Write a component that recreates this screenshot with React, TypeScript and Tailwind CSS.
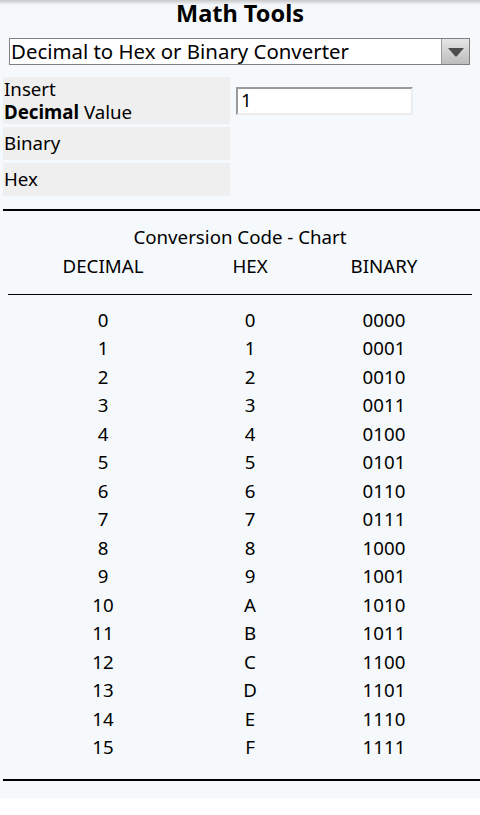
import React from "react";

const rows = Array.from({ length: 16 }, (_, i) => ({
  dec: String(i),
  hex: i.toString(16).toUpperCase(),
  bin: i.toString(2).padStart(4, "0"),
}));

const App = () => {
  return (
    <div className="w-[480px] min-h-[815px] bg-white font-['Noto_Sans','Open_Sans',sans-serif] text-black">
      <div className="relative bg-[#f6f9fc] pb-[17px]">
        {/* ombre du haut */}
        <div className="absolute top-0 left-0 right-0 h-[5px] bg-gradient-to-b from-[#c8c8c8] to-transparent" />

        <h1 className="relative text-center text-[23.5px] font-bold leading-[27px]">Math Tools</h1>

        {/* faux select */}
        <div className="mx-[9px] mt-[11px] h-[27px] w-[461px] border border-[#808080] bg-white flex items-center">
          <span className="flex-1 pl-[1px] pb-[1px] text-[20.4px] leading-[25px] whitespace-nowrap">
            Decimal to Hex or Binary Converter
          </span>
          <div className="w-[28px] h-[25px] bg-gradient-to-b from-[#e6e6e6] to-[#bdbdbd] border-l border-[#9a9a9a] flex items-center justify-center">
            <svg width="18" height="12" viewBox="0 0 18 12">
              <path d="M1 2 H17 L10 10 Q9 11 8 10 Z" fill="#4d4d4d" />
            </svg>
          </div>
        </div>

        {/* formulaire */}
        <div className="mt-[12px] flex flex-col gap-[3px] pl-[3px] text-[18.7px] leading-[23px]">
          <div className="flex items-center">
            <div className="w-[227px] h-[47px] bg-[#efefef] pl-[1px] pb-[2px] flex flex-col justify-center">
              <span>Insert</span>
              <span>
                <b>Decimal</b> Value
              </span>
            </div>
            <input
              defaultValue="1"
              className="ml-[6px] w-[177px] h-[28px] bg-white border-2 border-t-[#999] border-l-[#999] border-b-[#ececec] border-r-[#ececec] px-[3px] pb-[2px] text-[18.7px] outline-none"
            />
          </div>
          <div className="w-[227px] h-[33px] bg-[#efefef] pl-[1px] pb-[2px] flex items-center">Binary</div>
          <div className="w-[227px] h-[33px] bg-[#efefef] pl-[1px] pb-[2px] flex items-center">Hex</div>
        </div>

        <div className="mt-[13px] ml-[3px] h-[2px] bg-black" />

        {/* tableau */}
        <div className="text-[18.7px] leading-[23px]">
          <p className="mt-[14px] text-center">Conversion Code - Chart</p>
          <div className="mt-[6px] ml-[8px] grid grid-cols-[190px_104px_164px] text-center">
            <span>DECIMAL</span>
            <span>HEX</span>
            <span>BINARY</span>
          </div>
          <div className="mt-[17px] mx-[8px] h-px bg-black" />
          <div className="mt-[10px] flex flex-col">
            {rows.map((r) => (
              <div key={r.dec} className="ml-[8px] grid grid-cols-[190px_104px_164px] text-center h-[28.5px] items-center">
                <span>{r.dec}</span>
                <span>{r.hex}</span>
                <span>{r.bin}</span>
              </div>
            ))}
          </div>
        </div>

        <div className="mt-[18px] ml-[3px] h-[2px] bg-black" />
      </div>
    </div>
  );
};

export default App;
